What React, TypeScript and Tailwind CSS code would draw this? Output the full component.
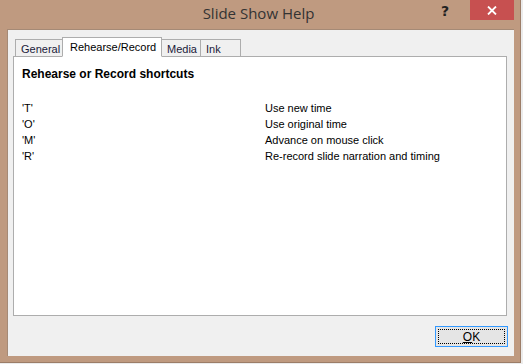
import React from "react";

const shortcuts = [
  { key: "'T'", action: "Use new time" },
  { key: "'O'", action: "Use original time" },
  { key: "'M'", action: "Advance on mouse click" },
  { key: "'R'", action: "Re-record slide narration and timing" },
];

const tabs = [
  { label: "General", w: "w-[48px]" },
  { label: "Rehearse/Record", w: "w-[100px]" },
  { label: "Media", w: "w-[40px]" },
  { label: "Ink", w: "w-[41px]" },
];

export default function App() {
  return (
    <div className="w-[523px] h-[364px] bg-[#ececec] overflow-hidden">
      <div className="w-[521px] h-[363px] bg-[#bf9a80] border-r border-b border-[#9c7d68] flex flex-col">
        {/* title bar */}
        <div className="h-[29px] flex items-start shrink-0">
          <div className="flex-1 pl-[76px] text-center pt-[3px] text-[15px] leading-[20px] text-[#333] font-['Open_Sans','Noto_Sans',sans-serif]">
            Slide Show Help
          </div>
          <div className="w-[17px] pt-[3px] text-[14px] leading-[16px] font-bold text-[#222] font-['DejaVu_Sans',sans-serif]">
            ?
          </div>
          <div className="ml-[12px] mr-[6px] w-[44px] h-[20px] bg-[#c75050] flex items-center justify-center">
            <svg width="10" height="9" viewBox="0 0 10 9">
              <path d="M1 0.5 L9 8.5 M9 0.5 L1 8.5" stroke="white" strokeWidth="1.8" />
            </svg>
          </div>
        </div>

        {/* client area */}
        <div className="ml-[7px] mr-[6px] h-[327px] bg-[#f0f0f0] border-l border-t border-[#a58a76] flex flex-col px-[5px] pt-[7px] font-['Liberation_Sans',Arial,sans-serif] text-[11px] text-black">
          <div className="flex items-end h-[19px] pl-[2px]">
            {tabs.map((t, i) =>
              i === 1 ? (
                <div
                  key={t.label}
                  className={`${t.w} h-[20px] -mb-px -ml-px bg-white border border-[#adadad] border-b-white text-[11px] leading-[16px] pt-[1px] pl-[7px] z-10`}
                >
                  {t.label}
                </div>
              ) : (
                <div
                  key={t.label}
                  className={`${t.w} h-[17px] bg-[#f0f0f0] border border-[#adadad] border-b-0 -ml-px first:ml-0 text-[11px] leading-[16px] pt-[1px] pl-[5px] text-[#1a1a3a]`}
                >
                  {t.label}
                </div>
              )
            )}
          </div>
          <div className="h-[260px] mr-[2px] bg-white border border-[#adadad] px-[8px] pt-[10px]">
            <div className="font-bold text-[12px] leading-[14px]">Rehearse or Record shortcuts</div>
            <div className="mt-[19px] flex flex-col">
              {shortcuts.map((s) => (
                <div key={s.key} className="flex leading-[16px] h-[16px]">
                  <div className="w-[243px]">{s.key}</div>
                  <div>{s.action}</div>
                </div>
              ))}
            </div>
          </div>
          <div className="flex justify-end pt-[10px] pr-[1px]">
            <button className="w-[73px] h-[21px] border border-[#3399ff] bg-[#e5e5e5] p-[2px]">
              <div className="w-full h-full border border-dotted border-black flex items-center justify-center text-[12px] leading-[14px]">
                <span className="underline">O</span>K
              </div>
            </button>
          </div>
        </div>
      </div>
    </div>
  );
}
